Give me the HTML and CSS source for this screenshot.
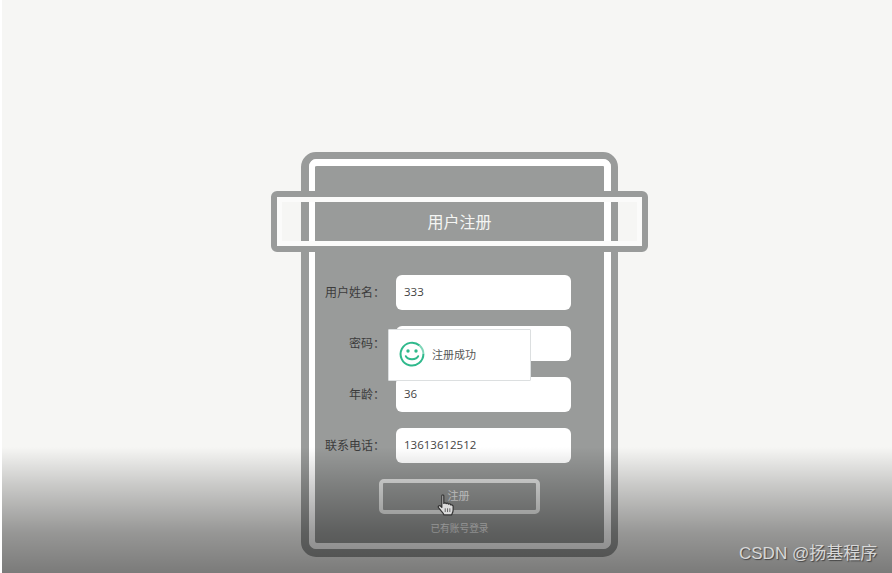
FILE: index.html
```html
<!DOCTYPE html>
<html lang="zh">
<head>
<meta charset="utf-8">
<title>用户注册</title>
<link rel="stylesheet" href="styles.css">
</head>
<body>
<div class="stage">
  <div class="card">
    <div class="frame">
      <div class="banner"><div class="banner-inner"><h1 class="title">用户注册</h1></div></div>
      <form class="form">
        <div class="row"><label class="label">用户姓名：</label><div class="input">333</div></div>
        <div class="row"><label class="label">密码：</label><div class="input"></div></div>
        <div class="row"><label class="label">年龄：</label><div class="input">36</div></div>
        <div class="row"><label class="label">联系电话：</label><div class="input">13613612512</div></div>
        <div class="submit">注册</div>
        <div class="login">已有账号登录</div>
      </form>
    </div>
  </div>
  <div class="toast">
    <svg class="smile" viewBox="0 0 26 26" width="26" height="26">
      <path d="M20.6 4.6A11.4 11.4 0 1 0 24.4 13" fill="none" stroke="#2fb98c" stroke-width="2"/>
      <path d="M24.4 13A11.4 11.4 0 0 0 20.6 4.6" fill="none" stroke="#7fd6b8" stroke-width="2"/>
      <circle cx="9" cy="10" r="1.7" fill="#2fb98c"/>
      <circle cx="17" cy="10" r="1.7" fill="#2fb98c"/>
      <path d="M6.8 15.2C8.5 19.2 17.5 19.2 19.2 15.2" fill="none" stroke="#2fb98c" stroke-width="2" stroke-linecap="round"/>
    </svg>
    <span class="toast-text">注册成功</span>
  </div>
  <div class="shade"></div>
  <svg class="cursor" viewBox="0 0 16 20" width="18" height="22">
    <path d="M4.2 1.6C4.2.4 6 .4 6 1.6V8.6C6.4 7.8 7.9 7.8 8.1 8.8 8.5 8 10 8.1 10.2 9.2 10.7 8.6 12.1 8.8 12.3 10 13 9.7 14.4 10 14.5 11.4V14.6C14.5 16.6 13.6 17.6 13 19H6.2C5.6 17.6 4.6 16.6 3.4 15.2L1.2 12.4C.4 11.2 1.8 10 3 10.9L4.2 12.2Z" fill="#dcdcdc" stroke="#333" stroke-width="1.1" stroke-linejoin="round"/>
    <path d="M7.3 13V16.4M9.4 13V16.4M11.5 13V16.4" stroke="#555" stroke-width=".8" fill="none"/>
  </svg>
  <div class="mark">CSDN @扬基程序</div>
</div>
</body>
</html>
```
FILE: styles.css
```css
html, body {
  margin: 0;
  padding: 0;
  background: #fff;
}
body {
  width: 892px;
  height: 573px;
  overflow: hidden;
  font-family: "Open Sans", "Noto Sans CJK SC", sans-serif;
}
.stage {
  position: relative;
  box-sizing: border-box;
  margin-left: 2px;
  width: 890px;
  height: 573px;
  padding: 152px 0 0 299px;
  background: #f6f6f4;
}
.card {
  box-sizing: border-box;
  width: 317px;
  height: 405px;
  border-style: solid;
  border-color: #999b9a;
  border-width: 7px 7px 8px 8px;
  border-radius: 15px;
}
.frame {
  box-sizing: border-box;
  height: 390px;
  border: 6px solid #fff;
  border-width: 7px 7px 6px 6px;
  border-radius: 8px;
  background: #999b9a;
  padding-top: 25px;
}
.banner {
  box-sizing: border-box;
  position: relative;
  height: 61px;
  margin: 0 -44px;
  border: 6px solid #999b9a;
  border-radius: 6px;
}
.banner-inner {
  box-sizing: border-box;
  height: 49px;
  display: flex;
  align-items: center;
  justify-content: center;
  border: 5px solid #fbfbfa;
  padding-bottom: 2px;
}
.title {
  margin: 0;
  font-size: 16px;
  font-weight: 400;
  color: #f4f5f3;
}
.form {
  display: flex;
  flex-direction: column;
  margin-top: 23px;
}
.row {
  display: flex;
  align-items: center;
  gap: 11px;
  height: 35px;
  margin-bottom: 16px;
}
.label {
  width: 70px;
  padding-bottom: 1px;
  text-align: right;
  font-size: 12px;
  color: #3c3c3c;
}
.input {
  box-sizing: border-box;
  width: 175px;
  height: 35px;
  padding-left: 8px;
  line-height: 34px;
  border-radius: 6px;
  background: #fff;
  font-size: 11.5px;
  color: #444;
}
.submit {
  box-sizing: border-box;
  align-self: center;
  width: 161px;
  height: 35px;
  padding-right: 2px;
  line-height: 25px;
  text-align: center;
  border: 4px solid #e6e7e6;
  border-radius: 5px;
  font-size: 11px;
  color: #ececec;
}
.login {
  align-self: center;
  margin-top: 8px;
  font-size: 9.7px;
  line-height: 14px;
  color: #e6e6e6;
}
.toast {
  box-sizing: border-box;
  position: absolute;
  left: 386px;
  top: 329px;
  width: 143px;
  height: 52px;
  display: flex;
  align-items: center;
  gap: 7px;
  padding: 0 0 2px 10px;
  background: #fff;
  border: 1px solid #dcdfe0;
  border-radius: 1px;
}
.toast-text {
  font-size: 11px;
  color: #555;
}
.shade {
  position: absolute;
  left: 0;
  right: 0;
  bottom: 0;
  height: 126px;
  background: linear-gradient(to bottom, rgba(0,0,0,0), rgba(0,0,0,.18) 30%, rgba(0,0,0,.39) 68%, rgba(0,0,0,.5));
}
.cursor {
  position: absolute;
  left: 435px;
  top: 494px;
}
.mark {
  position: absolute;
  left: 737px;
  top: 543px;
  font-family: "Liberation Sans", "Noto Sans CJK SC", sans-serif;
  font-size: 17px;
  line-height: 22px;
  color: #d8d8d8;
  text-shadow: 1px 1px 1px #444;
  white-space: nowrap;
}
```
